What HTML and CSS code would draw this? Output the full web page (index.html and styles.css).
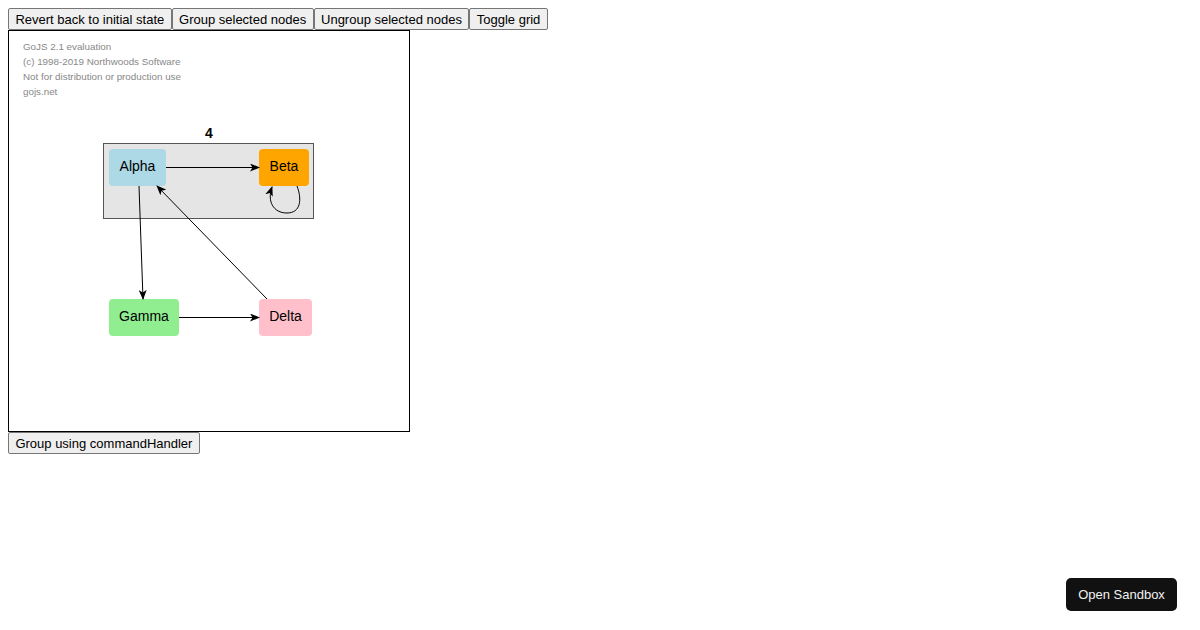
FILE: index.html
```html
<!DOCTYPE html>
<html>
<head>
<meta charset="utf-8">
<link rel="stylesheet" href="styles.css">
</head>
<body>
<div class="toolbar"><button class="btn">Revert back to initial state</button><button class="btn">Group selected nodes</button><button class="btn">Ungroup selected nodes</button><button class="btn">Toggle grid</button></div>
<div class="diagram">
<svg class="canvas" width="400" height="400" viewBox="0 0 400 400">
<defs>
<marker id="arr" viewBox="0 0 10 8" refX="9" refY="4" markerWidth="10" markerHeight="8" markerUnits="userSpaceOnUse" orient="auto">
<path d="M0,0 L10,4 L0,8 L2.5,4 z" fill="#000"/>
</marker>
</defs>
<g class="wm">
<text x="14" y="19">GoJS 2.1 evaluation</text>
<text x="14" y="34">(c) 1998-2019 Northwoods Software</text>
<text x="14" y="49">Not for distribution or production use</text>
<text x="14" y="64">gojs.net</text>
</g>
<text class="glabel" x="200" y="107">4</text>
<rect x="94.5" y="112.5" width="210" height="75" fill="#e5e5e5" stroke="#555" stroke-width="1"/>
<rect x="100" y="118" width="57" height="37" rx="4" fill="#add8e6"/>
<rect x="250" y="118" width="50" height="37" rx="4" fill="#ffa500"/>
<rect x="100" y="268" width="70" height="37" rx="4" fill="#90ee90"/>
<rect x="250" y="268" width="53" height="37" rx="4" fill="#ffc0cb"/>
<g class="links" fill="none" stroke="#000" stroke-width="1" marker-end="url(#arr)">
<line x1="157" y1="136.5" x2="250" y2="136.5"/>
<line x1="130" y1="155" x2="134" y2="268"/>
<line x1="170" y1="286.5" x2="250" y2="286.5"/>
<line x1="258" y1="268" x2="148" y2="155"/>
<path d="M288,155 C293,168 292,182 278,182 C264,182 258,170 263,156"/>
</g>
<g class="ntext">
<text x="128.5" y="140">Alpha</text>
<text x="275" y="140">Beta</text>
<text x="135" y="290">Gamma</text>
<text x="276.5" y="290">Delta</text>
</g>
</svg>
</div>
<button class="btn">Group using commandHandler</button>
<button class="sandbox">Open Sandbox</button>
</body>
</html>
```

FILE: styles.css
```css
body {
  margin: 8px;
  font-family: "Liberation Sans", Arial, sans-serif;
  background: #fff;
}
.toolbar {
  display: flex;
}
.btn {
  font-family: "Liberation Sans", Arial, sans-serif;
  font-size: 13px;
  height: 22px;
  padding: 0 6.4px;
  margin: 0;
  border: 1px solid #767676;
  border-radius: 2px;
  background: #efefef;
  color: #000;
  display: block;
}
.diagram {
  width: 400px;
  height: 400px;
  border: 1px solid #000;
}
.canvas {
  display: block;
}
.wm text {
  font-family: "Liberation Sans", Arial, sans-serif;
  font-size: 9.8px;
  fill: #888;
}
.glabel {
  font-family: "Liberation Sans", Arial, sans-serif;
  font-size: 14px;
  font-weight: bold;
  text-anchor: middle;
}
.ntext text {
  font-family: "Liberation Sans", Arial, sans-serif;
  font-size: 14px;
  text-anchor: middle;
  fill: #000;
}
.sandbox {
  position: fixed;
  right: 23px;
  bottom: 19px;
  width: 111px;
  height: 33px;
  background: #111;
  color: #f2f2f2;
  border: none;
  border-radius: 5px;
  font-family: "Liberation Sans", Arial, sans-serif;
  font-size: 13px;
  padding: 0;
}
```
